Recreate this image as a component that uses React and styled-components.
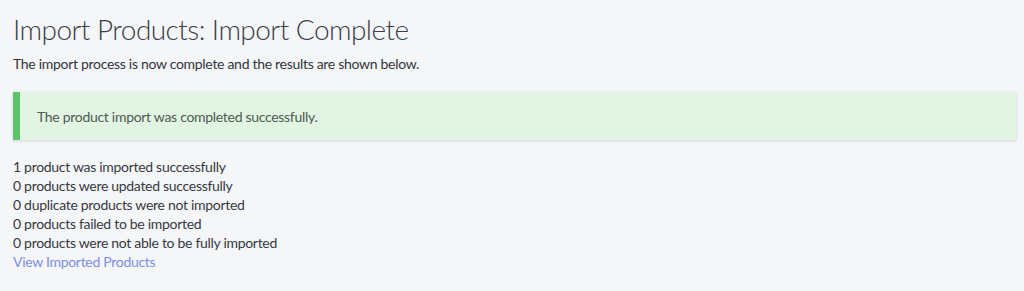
import React from 'react';
import styled, { createGlobalStyle } from 'styled-components';

const GlobalStyle = createGlobalStyle`
  html, body {
    margin: 0;
    padding: 0;
    background: #f5f6f8;
  }
  body {
    font-family: Lato, "Noto Sans", sans-serif;
    color: #313440;
  }
`;

const Page = styled.div`
  padding: 11px 13px 20px 13px;
  width: 1024px;
  height: 291px;
  box-sizing: border-box;
`;

const Title = styled.h1`
  margin: 0;
  font-size: 28px;
  font-weight: 300;
  line-height: 36px;
  letter-spacing: -0.55px;
  color: #3a3d47;
`;

const Intro = styled.p`
  margin: 7px 0 0 0;
  font-size: 14px;
  line-height: 20px;
  letter-spacing: -0.3px;
  color: #313440;
`;

const Alert = styled.div`
  margin-top: 18px;
  width: 1003px;
  height: 48px;
  box-sizing: border-box;
  display: flex;
  align-items: center;
  padding-left: 17px;
  background: #e2f4e2;
  border-left: 7px solid #5dc46b;
  box-shadow: 0 1px 3px rgba(0, 0, 0, 0.15);
  font-size: 14px;
  letter-spacing: -0.3px;
  color: #4e5a52;
`;

const Results = styled.ul`
  list-style: none;
  margin: 17px 0 0 0;
  padding: 0;
  font-size: 14px;
  line-height: 19px;
  letter-spacing: -0.3px;
`;

const Item = styled.li`
  color: #363942;
`;

const ViewLink = styled.a`
  color: #7b8ee0;
  text-decoration: none;
`;

const results = [
  '1 product was imported successfully',
  '0 products were updated successfully',
  '0 duplicate products were not imported',
  '0 products failed to be imported',
  '0 products were not able to be fully imported',
];

export default function App() {
  return (
    <>
      <GlobalStyle />
      <Page>
        <Title>Import Products: Import Complete</Title>
        <Intro>The import process is now complete and the results are shown below.</Intro>
        <Alert>The product import was completed successfully.</Alert>
        <Results>
          {results.map((r) => (
            <Item key={r}>{r}</Item>
          ))}
          <Item>
            <ViewLink href="#">View Imported Products</ViewLink>
          </Item>
        </Results>
      </Page>
    </>
  );
}
